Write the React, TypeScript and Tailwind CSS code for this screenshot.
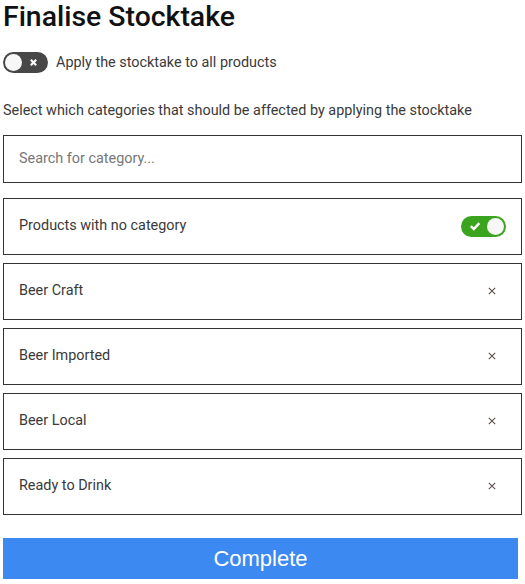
import { useState } from 'react';

const CATEGORIES = ['Beer Craft', 'Beer Imported', 'Beer Local', 'Ready to Drink'];

function Toggle(props: { on: boolean; onChange: (v: boolean) => void }) {
  return (
    <button
      type="button"
      onClick={() => props.onChange(!props.on)}
      className={
        'relative flex h-[21px] w-[45px] shrink-0 items-center rounded-full ' +
        (props.on ? 'bg-[#3aa41f]' : 'bg-[#474747]')
      }
    >
      {props.on ? (
        <>
          <svg viewBox="0 0 10 10" className="absolute left-[8px] h-[12px] w-[12px]">
            <path d="M1.5 5.2 L4 7.6 L8.6 2.6" fill="none" stroke="#fff" strokeWidth="2" />
          </svg>
          <span className="absolute right-[2px] h-[17px] w-[17px] rounded-full bg-[#f7f7f7]" />
        </>
      ) : (
        <>
          <span className="absolute left-[2px] h-[17px] w-[17px] rounded-full bg-[#f7f7f7]" />
          <svg viewBox="0 0 10 10" className="absolute right-[10px] h-[9px] w-[9px]">
            <path d="M2 2 L8 8 M8 2 L2 8" fill="none" stroke="#fff" strokeWidth="2.4" />
          </svg>
        </>
      )}
    </button>
  );
}

export default function App() {
  const [all, setAll] = useState(false);
  const [noCategory, setNoCategory] = useState(true);
  const [query, setQuery] = useState('');

  return (
    <div className="bg-white px-[3px] font-['Roboto',sans-serif] text-[#3a3a3a]">
      <h1 className="pt-[1px] text-[28.4px] font-medium leading-[31px] text-[#111]">Finalise Stocktake</h1>

      <div className="mt-[20px] flex items-center gap-[8px]">
        <Toggle on={all} onChange={setAll} />
        <span className="text-[14.4px]">Apply the stocktake to all products</span>
      </div>

      <p className="mt-[27px] text-[14.4px] leading-[20px]">
        Select which categories that should be affected by applying the stocktake
      </p>

      <input
        value={query}
        onChange={(e) => setQuery(e.target.value)}
        placeholder="Search for category..."
        className="mt-[14px] block h-[48px] w-full border border-[#333] px-[15px] text-[14.4px] text-[#333] outline-none placeholder:text-[#777]"
      />

      <div className="mt-[15px] flex flex-col gap-[8px]">
        <div className="flex h-[57px] items-center justify-between border border-[#333] pl-[15px] pr-[15px]">
          <span className="text-[14.4px]">Products with no category</span>
          <Toggle on={noCategory} onChange={setNoCategory} />
        </div>
        {CATEGORIES.map((c) => (
          <div
            key={c}
            className="flex h-[57px] items-center justify-between border border-[#333] pl-[15px] pr-[25px]"
          >
            <span className="text-[14.4px]">{c}</span>
            <svg viewBox="0 0 10 10" className="h-[8px] w-[8px]">
              <path d="M1 1 L9 9 M9 1 L1 9" fill="none" stroke="#5a4a4a" strokeWidth="1.3" />
            </svg>
          </div>
        ))}
      </div>

      <button
        type="button"
        className="mt-[23px] block h-[41px] w-[515px] bg-[#3b89f1] font-['Liberation_Sans',sans-serif] text-[22px] text-white"
      >
        Complete
      </button>
    </div>
  );
}
